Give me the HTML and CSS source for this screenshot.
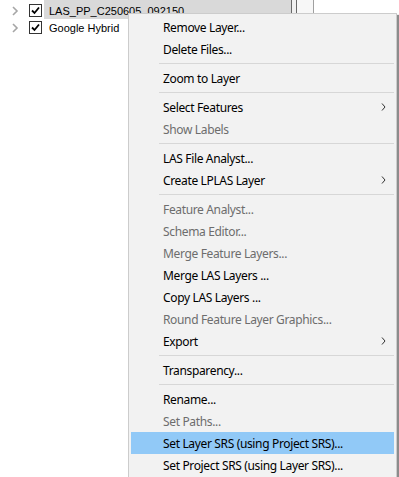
FILE: index.html
```html
<!DOCTYPE html>
<html>
<head>
<meta charset="utf-8">
<link rel="stylesheet" href="styles.css">
</head>
<body>
<div class="screen">
  <div class="pane">
    <div class="tree">
      <div class="row selected first">
        <svg class="expander" width="8" height="10" viewBox="0 0 8 10"><polyline points="2,1 6,5 2,9" fill="none" stroke="#a6a6a6" stroke-width="1.6"/></svg>
        <span class="check"><svg width="11" height="11" viewBox="0 0 11 11"><polyline points="2,5.5 4.5,8 9,2.5" fill="none" stroke="#000" stroke-width="1.8"/></svg></span>
        <span class="label">LAS_PP_C250605_092150</span>
      </div>
      <div class="row">
        <svg class="expander" width="8" height="10" viewBox="0 0 8 10"><polyline points="2,1 6,5 2,9" fill="none" stroke="#a6a6a6" stroke-width="1.6"/></svg>
        <span class="check"><svg width="11" height="11" viewBox="0 0 11 11"><polyline points="2,5.5 4.5,8 9,2.5" fill="none" stroke="#000" stroke-width="1.8"/></svg></span>
        <span class="label">Google Hybrid</span>
      </div>
    </div>
    <div class="splitter"></div>
    <div class="rightpane"></div>
  </div>

  <div class="menu">
    <div class="item">Remove Layer...</div>
    <div class="item">Delete Files...</div>
    <div class="sep"></div>
    <div class="item">Zoom to Layer</div>
    <div class="sep"></div>
    <div class="item">Select Features<svg class="arrow" width="5" height="8" viewBox="0 0 5 8"><polyline points="1,0.5 4,4 1,7.5" fill="none" stroke="#333" stroke-width="1"/></svg></div>
    <div class="item disabled">Show Labels</div>
    <div class="sep"></div>
    <div class="item">LAS File Analyst...</div>
    <div class="item">Create LPLAS Layer<svg class="arrow" width="5" height="8" viewBox="0 0 5 8"><polyline points="1,0.5 4,4 1,7.5" fill="none" stroke="#333" stroke-width="1"/></svg></div>
    <div class="sep"></div>
    <div class="item disabled">Feature Analyst...</div>
    <div class="item disabled">Schema Editor...</div>
    <div class="item disabled">Merge Feature Layers...</div>
    <div class="item">Merge LAS Layers ...</div>
    <div class="item">Copy LAS Layers ...</div>
    <div class="item disabled">Round Feature Layer Graphics...</div>
    <div class="item">Export<svg class="arrow" width="5" height="8" viewBox="0 0 5 8"><polyline points="1,0.5 4,4 1,7.5" fill="none" stroke="#333" stroke-width="1"/></svg></div>
    <div class="sep"></div>
    <div class="item">Transparency...</div>
    <div class="sep"></div>
    <div class="item">Rename...</div>
    <div class="item disabled">Set Paths...</div>
    <div class="item hover">Set Layer SRS (using Project SRS)...</div>
    <div class="item">Set Project SRS (using Layer SRS)...</div>
  </div>
</div>
</body>
</html>
```

FILE: styles.css
```css
html, body {
  margin: 0;
  padding: 0;
  background: #ffffff;
  overflow: hidden;
}
.screen {
  position: relative;
  width: 399px;
  height: 477px;
  overflow: hidden;
  background: #ffffff;
}
.pane {
  display: flex;
  height: 477px;
}
.tree {
  width: 291px;
  display: flex;
  flex-direction: column;
  font-family: "Liberation Sans", Arial, sans-serif;
  font-size: 11px;
  color: #000;
}
.row {
  height: 17px;
  display: flex;
  align-items: center;
}
.row.first {
  height: 19px;
  padding-top: 2px;
  box-sizing: border-box;
}
.row.selected {
  background: linear-gradient(to right, #ffffff 0, #ffffff 44px, #d9d9d9 44px);
}
.expander {
  margin-left: 11px;
  flex: none;
}
.check {
  margin-left: 10px;
  width: 11px;
  height: 11px;
  border: 1px solid #333;
  background: #fff;
  display: flex;
  flex: none;
}
.label {
  margin-left: 7px;
  white-space: nowrap;
}
.splitter {
  width: 4px;
  border-left: 1px solid #696969;
  border-right: 1px solid #696969;
  background: #f0f0f0;
}
.rightpane {
  width: 16px;
  background: #f7f7f7;
  border-right: 1px solid #a0a0a0;
}
.menu {
  position: absolute;
  left: 128px;
  top: 13px;
  width: 263px;
  padding: 2px;
  border: 1px solid #cccccc;
  background: #f2f2f2;
  box-shadow: 2px 2px 1px rgba(0,0,0,0.45);
  display: flex;
  flex-direction: column;
  font-family: "Noto Sans", "Open Sans", sans-serif;
  font-size: 12px;
  letter-spacing: -0.35px;
  color: #000;
}
.item {
  height: 22px;
  display: flex;
  align-items: center;
  padding-left: 32px;
  padding-right: 8px;
  white-space: nowrap;
}
.item.disabled {
  color: #6d6d6d;
}
.item.hover {
  background: #91c9f7;
}
.arrow {
  margin-left: auto;
}
.sep {
  height: 7px;
  display: flex;
  align-items: center;
  margin-left: 28px;
}
.sep::before {
  content: "";
  display: block;
  flex: 1;
  height: 1px;
  background: #d7d7d7;
}
```
